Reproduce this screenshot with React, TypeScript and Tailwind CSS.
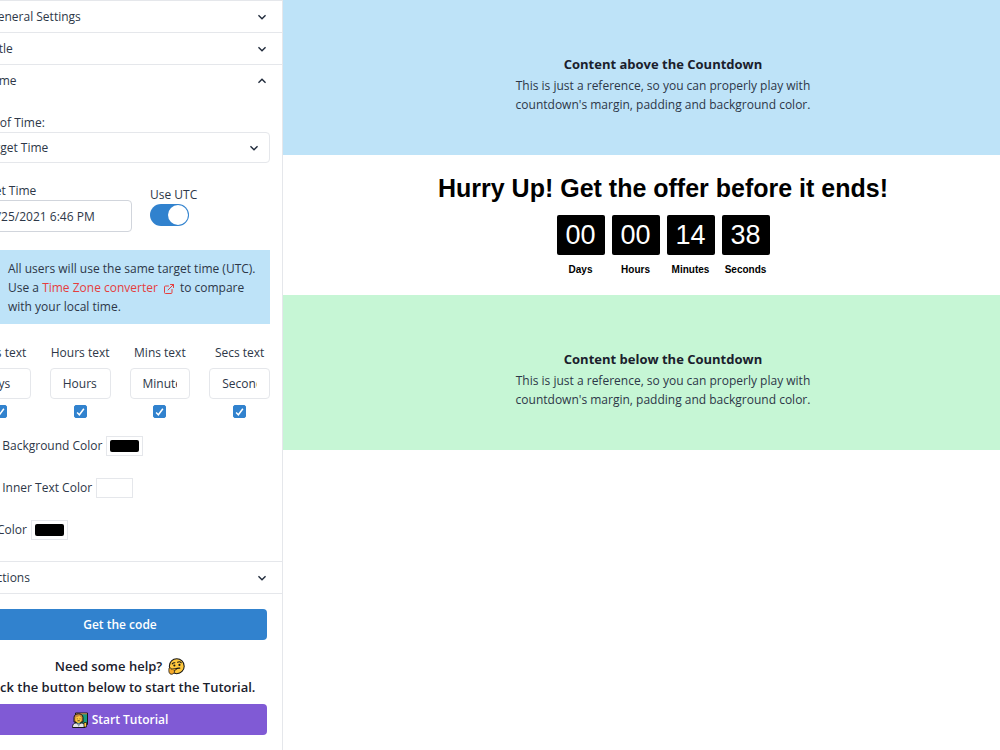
// Countdown builder: settings sidebar on the left, live preview on the right
import { useState } from 'react'
import type { ReactNode } from 'react'

interface Unit {
  key: string
  label: string
  text: string
  value: string
  enabled: boolean
}

const INITIAL_UNITS: Unit[] = [
  { key: 'days', label: 'Days text', text: 'Days', value: '00', enabled: true },
  { key: 'hours', label: 'Hours text', text: 'Hours', value: '00', enabled: true },
  { key: 'mins', label: 'Mins text', text: 'Minutes', value: '14', enabled: true },
  { key: 'secs', label: 'Secs text', text: 'Seconds', value: '38', enabled: true },
]

function Chevron({ up }: { up?: boolean }) {
  return (
    <svg viewBox="0 0 24 24" className={`size-4 fill-gray-800 ${up ? 'rotate-180' : ''}`} aria-hidden="true">
      <path d="M16.59 8.59L12 13.17 7.41 8.59 6 10l6 6 6-6z" />
    </svg>
  )
}

function ThinkingFace() {
  return (
    <svg viewBox="0 0 32 32" className="size-[17px]" aria-hidden="true">
      <circle cx="16.500" cy="15.500" r="14" fill="#ffc83d" stroke="#171717" strokeWidth="2" />
      <path d="M8 11q2-2.500 5-2M18 8q4-2.500 7 1" fill="none" stroke="#171717" strokeWidth="2" strokeLinecap="round" />
      <circle cx="12" cy="14" r="2" fill="#171717" />
      <circle cx="21.500" cy="13" r="2" fill="#171717" />
      <path d="M14 21q4-2.500 8-2" fill="none" stroke="#171717" strokeWidth="2.500" strokeLinecap="round" />
      <path
        d="M2 19c2-2 4 0 4 2l7-1c3-.3 3 2.500 0 3.200l-2 .6c2 .7 1.500 3.700-.5 5.200-3 2.500-6.500 2-8-1-1.200-2.500-1-6-.5-9z"
        fill="#f7a928"
        stroke="#171717"
        strokeWidth="1.500"
      />
    </svg>
  )
}

function Teacher() {
  return (
    <svg viewBox="0 0 32 32" className="size-4" aria-hidden="true">
      <path d="M7 2h24v23H7z" fill="#199b7f" stroke="#171717" strokeWidth="2" />
      <path d="M8 3.500h22" stroke="#b97a48" strokeWidth="2.500" />
      <path d="M4 20V11c0-10 18-10 18 0v9H4z" fill="#c98a3c" stroke="#171717" strokeWidth="2" />
      <path d="M7 11q6-1 8-4 0 3 4 4v4c0 9-12 9-12 0z" fill="#ffc83d" />
      <path d="M10.500 13v1.500M16 13v1.500M11 17.500h4.500" stroke="#171717" strokeWidth="1.500" />
      <path d="M1 31c0-7 3-9 8-9l4.500 3 4.500-3c5 0 8 2 8 9z" fill="#e6e6e6" stroke="#171717" strokeWidth="2" />
      <path d="M10 23l3.500 7 3.500-7z" fill="#8b95a5" />
      <path d="M24 21h5v9h-5z" fill="#ffc83d" stroke="#171717" strokeWidth="1.500" />
    </svg>
  )
}

interface SectionProps {
  title: string
  open?: boolean
  onToggle?: () => void
  children?: ReactNode
}

function Section({ title, open, onToggle, children }: SectionProps) {
  return (
    <section className="border-t border-gray-200">
      <button
        type="button"
        aria-expanded={!!open}
        onClick={onToggle}
        className="flex h-[31px] w-full items-center justify-between pr-3 pl-8"
      >
        <span>{title}</span>
        <Chevron up={open} />
      </button>
      {open && children}
    </section>
  )
}

interface ColorFieldProps {
  id: string
  label: string
  value: string
  onChange: (value: string) => void
}

function ColorField({ id, label, value, onChange }: ColorFieldProps) {
  return (
    <div className="flex h-[42px] items-center gap-1">
      <label htmlFor={id}>{label}</label>
      <input
        id={id}
        type="color"
        value={value}
        onChange={(e) => onChange(e.target.value)}
        className="h-5 w-[37px] border border-gray-200 bg-white p-[3px] [&::-webkit-color-swatch]:rounded-xs [&::-webkit-color-swatch]:border-0 [&::-webkit-color-swatch-wrapper]:p-0"
      />
    </div>
  )
}

function FillerContent({ title, className }: { title: string; className: string }) {
  return (
    <section className={`pt-[54px] pb-[41px] text-center leading-[19px] ${className}`}>
      <h2 className="mb-0.5 text-[13px] leading-5 font-bold text-[#1a202c]">{title}</h2>
      <p>
        This is just a reference, so you can properly play with
        <br />
        countdown's margin, padding and background color.
      </p>
    </section>
  )
}

export default function App() {
  const [openSection, setOpenSection] = useState('Time')
  const [units, setUnits] = useState(INITIAL_UNITS)
  const [target, setTarget] = useState('03/25/2021 6:46 PM')
  const [useUtc, setUseUtc] = useState(true)
  const [unitBg, setUnitBg] = useState('#000000')
  const [unitColor, setUnitColor] = useState('#ffffff')
  const [textColor, setTextColor] = useState('#000000')

  const sectionProps = (title: string) => ({
    title,
    open: openSection === title,
    onToggle: () => setOpenSection(openSection === title ? '' : title),
  })

  const updateUnit = (key: string, patch: Partial<Unit>) =>
    setUnits(units.map((u) => (u.key === key ? { ...u, ...patch } : u)))

  return (
    <div className="overflow-hidden bg-white font-['Open_Sans',sans-serif] text-xs text-[#2d3748]">
      <div className="-mx-[43px] flex min-h-screen">
        {/* Settings */}
        <aside className="w-[326px] shrink-0 border-r border-gray-200">
          <Section {...sectionProps('General Settings')} />
          <Section {...sectionProps('Title')} />
          <Section {...sectionProps('Time')}>
            <div className="pt-[18px] pr-3 pb-2.5 pl-[13px] leading-[18px]">
              <label htmlFor="time-type">Type of Time:</label>
              <div className="relative">
                <select
                  id="time-type"
                  className="h-[31px] w-full appearance-none rounded border border-gray-200 bg-white px-[11px]"
                >
                  <option>Target Time</option>
                  <option>Visitor Time</option>
                </select>
                <span className="pointer-events-none absolute top-2 right-2">
                  <Chevron />
                </span>
              </div>

              <div className="mt-[19px] flex gap-[18px]">
                <div className="w-[162px]">
                  <label htmlFor="target-time" className="block">Target Time</label>
                  <input
                    id="target-time"
                    value={target}
                    onChange={(e) => setTarget(e.target.value)}
                    className="h-8 w-full rounded border border-gray-300 px-3"
                  />
                </div>
                <div className="pt-1">
                  <label htmlFor="use-utc" className="block">Use UTC</label>
                  <input
                    id="use-utc"
                    type="checkbox"
                    role="switch"
                    checked={useUtc}
                    onChange={(e) => setUseUtc(e.target.checked)}
                    className="flex h-[22px] w-[39px] appearance-none rounded-full bg-gray-300 p-px before:size-5 before:rounded-full before:bg-white checked:justify-end checked:bg-[#3182ce]"
                  />
                </div>
              </div>

              <div className="mt-[18px] bg-[#bee3f8] pt-[9px] pb-2 pl-[38px] leading-[19px]">
                All users will use the same target time (UTC).
                <br />
                Use a{' '}
                <a href="#converter" className="text-[#e53e3e]">
                  Time Zone converter
                  <svg
                    viewBox="0 0 24 24"
                    className="mx-[5px] inline size-3 fill-none stroke-current stroke-2"
                    strokeLinecap="round"
                    strokeLinejoin="round"
                    aria-hidden="true"
                  >
                    <path d="M18 13v6a2 2 0 0 1-2 2H5a2 2 0 0 1-2-2V8a2 2 0 0 1 2-2h6M15 3h6v6M10 14L21 3" />
                  </svg>
                </a>
                to compare
                <br />
                with your local time.
              </div>

              <div className="mt-5 mb-[7px] grid grid-cols-4 gap-[19px]">
                {units.map((unit) => (
                  <div key={unit.key} className="flex flex-col items-center">
                    <label htmlFor={unit.key} className="whitespace-nowrap">{unit.label}</label>
                    <input
                      id={unit.key}
                      value={unit.text}
                      onChange={(e) => updateUnit(unit.key, { text: e.target.value })}
                      className="mt-1.5 h-[31px] w-full rounded border border-gray-200 px-3"
                    />
                    <span className="relative mt-1.5 size-[13px]">
                      <input
                        type="checkbox"
                        aria-label={`Show ${unit.text}`}
                        checked={unit.enabled}
                        onChange={(e) => updateUnit(unit.key, { enabled: e.target.checked })}
                        className="block size-[13px] appearance-none rounded-xs border border-gray-300 checked:border-[#3182ce] checked:bg-[#3182ce]"
                      />
                      {unit.enabled && (
                        <svg
                          viewBox="0 0 12 10"
                          className="pointer-events-none absolute top-[3px] left-[2px] w-[9px] fill-none stroke-white stroke-2"
                          aria-hidden="true"
                        >
                          <path d="M1.500 6L4.500 9 10.500 1" />
                        </svg>
                      )}
                    </span>
                  </div>
                ))}
              </div>

              <ColorField id="unit-bg" label="Units Background Color" value={unitBg} onChange={setUnitBg} />
              <ColorField id="unit-color" label="Units Inner Text Color" value={unitColor} onChange={setUnitColor} />
              <ColorField id="text-color" label="Text Color" value={textColor} onChange={setTextColor} />
            </div>
          </Section>
          <Section {...sectionProps('Actions')} />

          <div className="border-t border-gray-200 pt-[15px] pr-[15px] pl-4 text-center">
            <button type="button" className="h-[31px] w-full rounded bg-[#3182ce] font-semibold text-white">
              Get the code
            </button>
            <div className="mt-4 mb-1.5 text-[13px] leading-[21px] font-semibold text-[#1a202c]">
              <p className="flex items-center justify-center gap-1.5">
                Need some help? <ThinkingFace />
              </p>
              <p className="whitespace-nowrap">Click the button below to start the Tutorial.</p>
            </div>
            <button
              type="button"
              className="flex h-[31px] w-full items-center justify-center gap-1 rounded bg-[#805ad5] font-semibold text-white"
            >
              <Teacher /> Start Tutorial
            </button>
          </div>
        </aside>

        {/* Preview */}
        <main className="min-w-0 flex-1">
          <FillerContent title="Content above the Countdown" className="bg-[#bee3f8]" />
          <section className="flex flex-col items-center pt-[18px] pb-[18px] font-['Liberation_Sans',sans-serif] text-black">
            <h1 className="text-[25px] leading-[30px] font-bold">Hurry Up! Get the offer before it ends!</h1>
            <div className="mt-3 flex gap-[7px]">
              {units
                .filter((u) => u.enabled)
                .map((u) => (
                  <div key={u.key} className="flex w-12 flex-col items-center">
                    <div
                      className="w-full rounded-xs text-center text-[27px] leading-10"
                      style={{ backgroundColor: unitBg, color: unitColor }}
                    >
                      {u.value}
                    </div>
                    <div className="mt-2 text-[10px] leading-[14px] font-bold" style={{ color: textColor }}>
                      {u.text}
                    </div>
                  </div>
                ))}
            </div>
          </section>
          <FillerContent title="Content below the Countdown" className="bg-[#c6f6d5]" />
        </main>
      </div>
    </div>
  )
}
